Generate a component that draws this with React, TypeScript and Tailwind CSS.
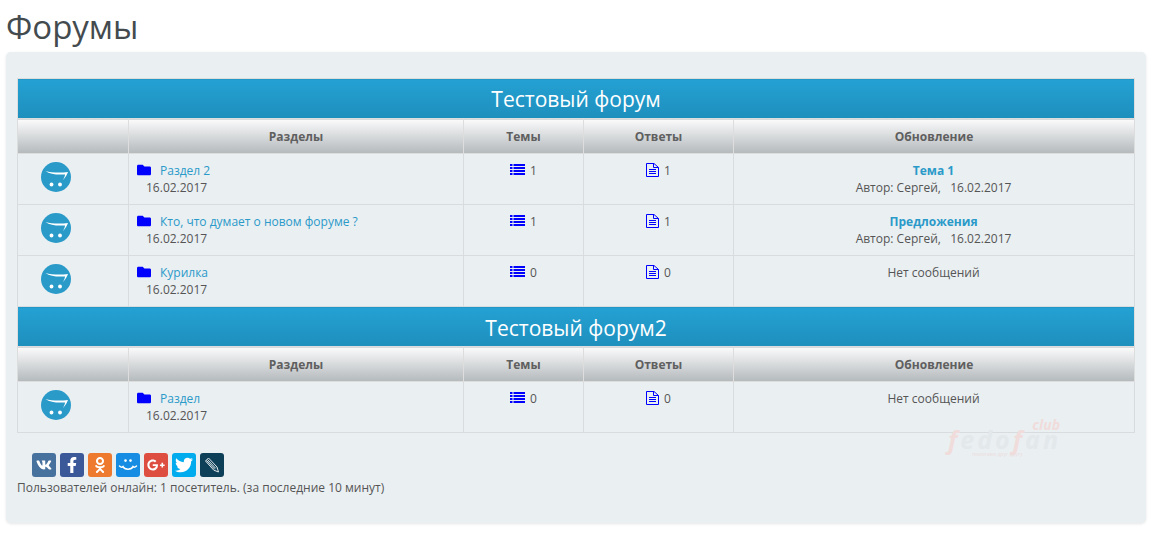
import React from "react";
import { FaFolder, FaVk, FaFacebookF, FaOdnoklassniki, FaGooglePlusG, FaTwitter } from "react-icons/fa";

const font = { fontFamily: '"Open Sans", sans-serif' };

function Cart() {
  return (
    <svg width="30" height="30" viewBox="0 0 30 30" className="block ml-[23px]">
      <circle cx="15" cy="15" r="15" fill="#2a9ac9" />
      <path d="M4.5 9 C10 10.6 19 11 27 10 C26 12.5 24.5 15.5 22 18 C23.4 15.2 23.9 13.6 24.1 12.4 C17 13 9 12.5 4.5 9 Z" fill="#fff" />
      <circle cx="10.5" cy="22.5" r="1.9" fill="#fff" />
      <circle cx="19" cy="22.5" r="1.9" fill="#fff" />
    </svg>
  );
}

function ListIcon() {
  return (
    <svg width="15" height="12" viewBox="0 0 15 12" fill="#0000ff" className="mr-[5px] -mt-[2px] shrink-0">
      <path d="M0 0h2.5v2H0zM3.5 0H15v2H3.5zM0 3h2.5v2H0zM3.5 3H15v2H3.5zM0 6h2.5v2H0zM3.5 6H15v2H3.5zM0 9h2.5v2H0zM3.5 9H15v2H3.5z" />
    </svg>
  );
}

function FileIcon() {
  return (
    <svg width="13" height="14" viewBox="0 0 13 14" fill="none" stroke="#0000ff" className="mr-[5px] -mt-[1px] shrink-0">
      <path d="M0.5 0.5H8L12.5 4.5V13.5H0.5Z" />
      <path d="M7.5 0.5V4.5H12.5" />
      <path d="M3 6.5H10M3 8.5H10M3 10.5H10" />
    </svg>
  );
}

function Header() {
  const c = "border border-[#dddddd] bg-gradient-to-b from-[#fbfbfb] to-[#b4b9bc] text-[12px] font-bold text-[#5f5f5f] text-center p-0 pt-[1px] h-[35px]";
  return (
    <tr>
      <th className={c}></th>
      <th className={c}>Разделы</th>
      <th className={c}>Темы</th>
      <th className={c}>Ответы</th>
      <th className={c}>Обновление</th>
    </tr>
  );
}

function Title({ children, first }: { children: React.ReactNode; first?: boolean }) {
  return (
    <tr>
      <td colSpan={5} className={"h-[40px] p-0 text-center text-[21px] leading-[28px] text-white bg-gradient-to-b from-[#24a1d3] to-[#1e8fbd] border border-[#dddddd] " + (first ? "pt-0" : "pt-[2px]")}>
        {children}
      </td>
    </tr>
  );
}

type RowProps = { name: string; topics: string; replies: string; update?: string };

function Row({ name, topics, replies, update }: RowProps) {
  const c = "border border-[#d9dcde] align-top p-0 h-[51px]";
  return (
    <tr className="text-[12px] leading-[17px] text-[#555555]">
      <td className={c + " pt-[8px]"}><Cart /></td>
      <td className={c + " pl-[8px] pt-[8px]"}>
        <div className="flex items-center">
          <FaFolder className="text-[#0000ff] text-[14px] mr-[9px] -mt-[2px]" />
          <span className="text-[#2a9ac9]">{name}</span>
        </div>
        <div className="pl-[9px]">16.02.2017</div>
      </td>
      <td className={c + " pt-[8px]"}>
        <div className="flex items-center justify-center">
          <ListIcon />
          <span>{topics}</span>
        </div>
      </td>
      <td className={c + " pt-[8px]"}>
        <div className="flex items-center justify-center">
          <FileIcon />
          <span>{replies}</span>
        </div>
      </td>
      <td className={c + " pt-[8px] pr-[1px] text-center"}>
        {update ? (
          <>
            <div className="font-bold text-[#2a9ac9]">{update}</div>
            <div>Автор: Сергей, &nbsp; 16.02.2017</div>
          </>
        ) : (
          <div>Нет сообщений</div>
        )}
      </td>
    </tr>
  );
}

function Social({ bg, children }: { bg: string; children: React.ReactNode }) {
  return <div className={"w-[24px] h-[24px] rounded-[3px] flex items-center justify-center text-white " + bg}>{children}</div>;
}

export default function App() {
  return (
    <div style={font} className="bg-white min-h-[554px] px-[6px]">
      <h1 className="text-[33px] leading-[35px] text-[#444b4f] pt-[9px] pb-[8px] font-normal">Форумы</h1>
      <div className="relative h-[471px] w-[1140px] bg-[#eaeff2] rounded-[5px] shadow-[0_1px_3px_rgba(0,0,0,0.1)] pt-[26px] px-[11px]">
        <table className="w-[1117px] border-collapse table-fixed">
          <colgroup>
            <col className="w-[111px]" />
            <col className="w-[335px]" />
            <col className="w-[120px]" />
            <col className="w-[150px]" />
            <col className="w-[401px]" />
          </colgroup>
          <tbody>
            <Title first>Тестовый форум</Title>
            <Header />
            <Row name="Раздел 2" topics="1" replies="1" update="Тема 1" />
            <Row name="Кто, что думает о новом форуме ?" topics="1" replies="1" update="Предложения" />
            <Row name="Курилка" topics="0" replies="0" />
            <Title>Тестовый форум2</Title>
            <Header />
            <Row name="Раздел" topics="0" replies="0" />
          </tbody>
        </table>
        <div className="flex gap-[4px] ml-[15px] mt-[20px]">
          <Social bg="bg-[#48729e]"><FaVk className="text-[16px]" /></Social>
          <Social bg="bg-[#3b5898]"><FaFacebookF className="text-[16px]" /></Social>
          <Social bg="bg-[#ee7a2f]"><FaOdnoklassniki className="text-[16px]" /></Social>
          <Social bg="bg-[#168de2]">
            <svg width="20" height="14" viewBox="0 0 20 14" fill="none">
              <circle cx="7.5" cy="2.6" r="1.3" fill="#fff" />
              <circle cx="12.5" cy="2.6" r="1.3" fill="#fff" />
              <path d="M1.5 8 C3 9.5 4 9.5 5 8.6 C6.5 12 13.5 12 15 8.6 C16 9.5 17 9.5 18.5 8" stroke="#fff" strokeWidth="1.5" strokeLinecap="round" />
            </svg>
          </Social>
          <Social bg="bg-[#dd4e41]"><FaGooglePlusG className="text-[18px]" /></Social>
          <Social bg="bg-[#00aced]"><FaTwitter className="text-[18px]" /></Social>
          <Social bg="bg-[#0e3f59]">
            <svg width="18" height="18" viewBox="0 0 18 18" fill="none" stroke="#dfe8ec" strokeWidth="1">
              <path d="M2.5 5 L5.5 2 L14 11 L15.5 16 L10.8 14.2 Z" />
              <path d="M4.5 3.5 L12.7 12.3 M3.5 4.5 L11.8 13.3" />
            </svg>
          </Social>
        </div>
        <div className="text-[12px] leading-[16px] text-[#555555] mt-[3px]">Пользователей онлайн: 1 посетитель. (за последние 10 минут)</div>
        <div className="absolute left-[942px] top-[367px] w-[112px] h-[36px] pointer-events-none italic font-bold">
          <div className="absolute left-0 top-[13px] flex text-[25px] leading-[14px] h-[14px] tracking-[3px] whitespace-nowrap text-[#e3e8eb]">
            <div className="text-[#f0dcdb]">f</div>
            <div>edo</div>
            <div className="text-[#f0dcdb]">f</div>
            <div>an</div>
          </div>
          <div className="absolute right-0 top-0 text-[14px] leading-[11px] h-[11px] text-[#f0dcdb]">club</div>
          <div className="absolute left-[24px] top-[32px] text-[5px] leading-[6px] text-[#ecdcdc] whitespace-nowrap not-italic font-normal">помогаем друг другу</div>
        </div>
      </div>
    </div>
  );
}
